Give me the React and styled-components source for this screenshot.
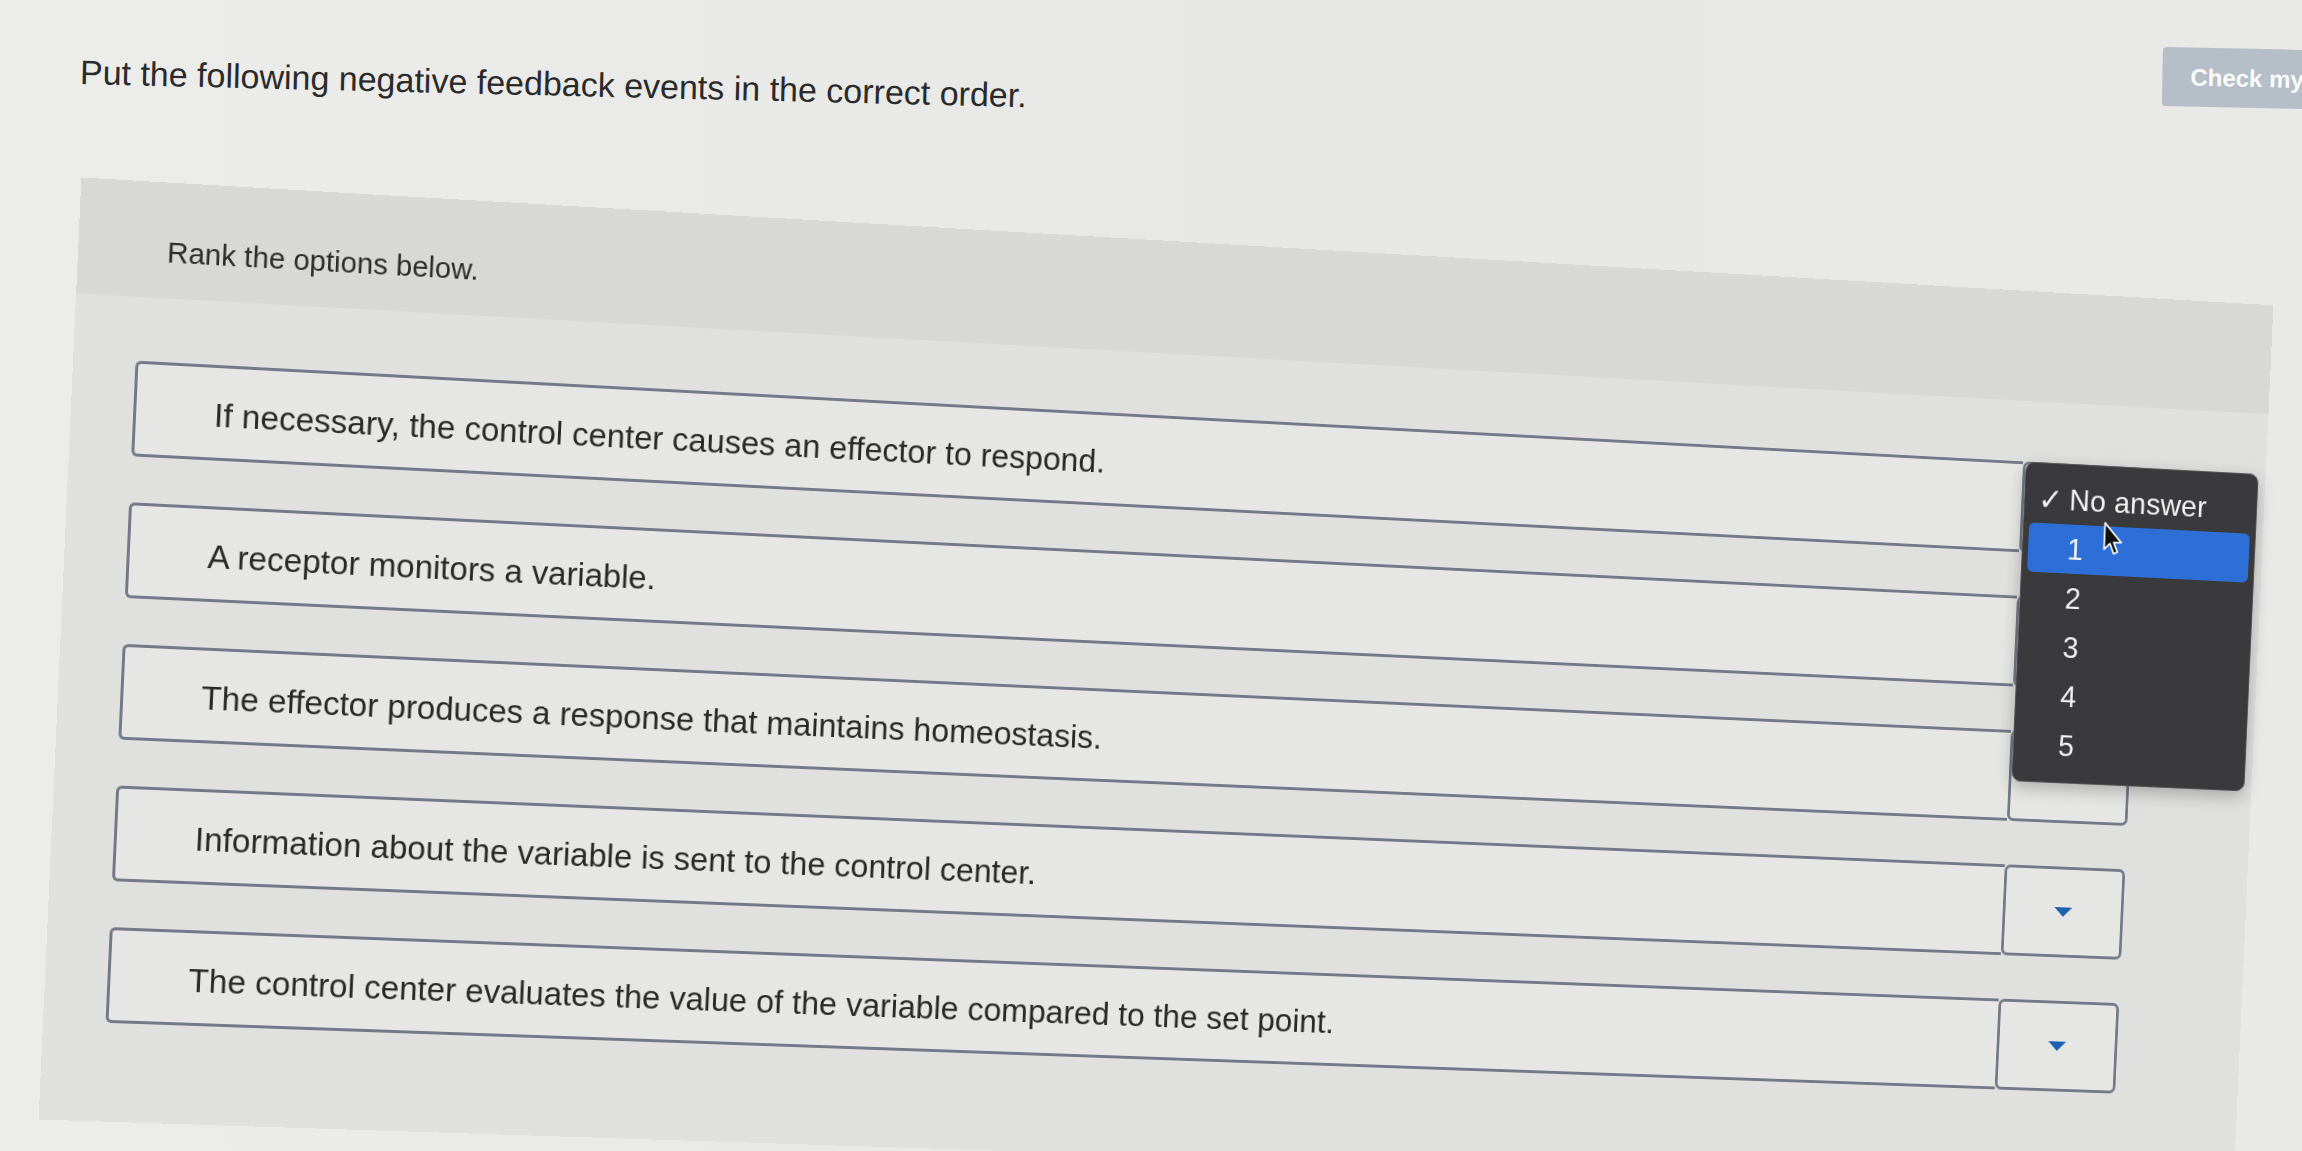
import React from 'react';
import styled, { createGlobalStyle } from 'styled-components';

const GlobalStyle = createGlobalStyle`
  html, body {
    margin: 0;
    padding: 0;
    background: #e8e8e6;
    overflow: hidden;
  }
  body {
    font-family: "Liberation Sans", "DejaVu Sans", Arial, sans-serif;
    color: #2e2e2e;
  }
`;

const Page = styled.div`
  width: 2302px;
  height: 1151px;
  overflow: hidden;
  background: linear-gradient(90deg, #ececea 0%, #e7e7e5 60%, #e9e9e7 100%);
`;

const Header = styled.header`
  display: flex;
  justify-content: space-between;
  align-items: flex-start;
  height: 177px;
  padding-left: 80px;
`;

const Title = styled.h1`
  margin: 52px 0 0;
  font-size: 34px;
  line-height: 40px;
  font-weight: 400;
  color: #2a2a2a;
  transform: rotate(1.4deg);
  transform-origin: left center;
`;

const ButtonSlot = styled.div`
  width: 139px;
  flex-shrink: 0;
  margin-top: 47px;
`;

const CheckButton = styled.button`
  height: 59px;
  padding: 0 28px;
  border: none;
  border-radius: 4px;
  background: #b6bec7;
  color: #fbfbfb;
  font-family: "Liberation Sans", Arial, sans-serif;
  font-size: 24px;
  font-weight: 700;
  white-space: nowrap;
  transform: rotate(1.2deg);
  transform-origin: left top;
`;

/* the photo looks at the screen from the left, slightly rolled */
const Panel = styled.section`
  width: 2353px;
  height: 943px;
  margin-left: 60px;
  background: #e0e0de;
  transform: rotate(2.6deg) perspective(4500px) rotateY(7deg);
  transform-origin: left center;
  display: flex;
  flex-direction: column;
`;

const PanelHead = styled.div`
  height: 116px;
  padding: 52px 0 0 90px;
  box-sizing: border-box;
  background: #d8d8d6;
  font-size: 30px;
  line-height: 36px;
  color: #2b2b2b;
`;

const RankList = styled.ol`
  list-style: none;
  margin: 0;
  padding: 64px 139px 0 63px;
  display: flex;
  flex-direction: column;
  gap: 46px;
`;

const RankRow = styled.li`
  display: flex;
  height: 96px;
`;

const OptionText = styled.div`
  flex: 1;
  display: flex;
  align-items: center;
  padding: 4px 0 0 79px;
  background: #e6e6e4;
  border: 3px solid #737988;
  border-right: none;
  border-radius: 6px 0 0 6px;
  font-size: 34px;
  color: #282828;
  white-space: nowrap;
`;

const SelectBox = styled.div`
  position: relative;
  width: 130px;
  display: flex;
  align-items: center;
  justify-content: center;
  background: #e6e6e4;
  border: 3px solid #737988;
  border-radius: 7px;
`;

const Caret = styled.span`
  width: 0;
  height: 0;
  border-left: 10px solid transparent;
  border-right: 10px solid transparent;
  border-top: 10px solid #1d5fb0;
`;

const Menu = styled.ul`
  position: absolute;
  top: -3px;
  left: 0;
  width: 250px;
  margin: 0;
  padding: 11px 6px 13px;
  list-style: none;
  background: #3a3a3c;
  border: 1px solid #58585b;
  border-radius: 10px;
  box-shadow: 0 6px 18px rgba(0, 0, 0, 0.25);
  z-index: 5;
`;

const MenuItem = styled.li`
  height: 52px;
  display: flex;
  align-items: center;
  padding-left: ${p => (p.$checked ? '9px' : '44px')};
  border-radius: 6px;
  background: ${p => (p.$active ? '#2d6fd7' : 'transparent')};
  color: #f3f3f3;
  font-size: 32px;
  letter-spacing: 0.3px;
  font-family: "Liberation Sans", "DejaVu Sans", Arial, sans-serif;
  white-space: nowrap;
`;

const Tick = styled.span`
  display: inline-block;
  width: 35px;
  font-family: "DejaVu Sans", sans-serif;
  font-size: 33px;
  font-weight: 700;
`;

const Pointer = styled.svg`
  position: absolute;
  left: 90px;
  top: 58px;
  width: 23px;
  height: 36px;
  z-index: 6;
`;

const options = [
  'If necessary, the control center causes an effector to respond.',
  'A receptor monitors a variable.',
  'The effector produces a response that maintains homeostasis.',
  'Information about the variable is sent to the control center.',
  'The control center evaluates the value of the variable compared to the set point.',
];

const RankMenu = () => (
  <Menu>
    <MenuItem $checked>
      <Tick>✓</Tick>No answer
    </MenuItem>
    {[1, 2, 3, 4, 5].map(n => (
      <MenuItem key={n} $active={n === 1}>
        {n}
      </MenuItem>
    ))}
    <Pointer viewBox="0 0 17 27">
      <path
        d="M1 1 L1 22 L5.8 17.4 L9.3 25.2 L12.4 23.8 L9 16.2 L15.4 16.2 Z"
        fill="#111"
        stroke="#fff"
        strokeWidth="1.4"
        strokeLinejoin="round"
      />
    </Pointer>
  </Menu>
);

export default function App() {
  return (
    <Page>
      <GlobalStyle />
      <Header>
        <Title>Put the following negative feedback events in the correct order.</Title>
        <ButtonSlot>
          <CheckButton>Check my work</CheckButton>
        </ButtonSlot>
      </Header>
      <Panel>
        <PanelHead>Rank the options below.</PanelHead>
        <RankList>
          {options.map((text, i) => (
            <RankRow key={text}>
              <OptionText>{text}</OptionText>
              <SelectBox>
                <Caret />
                {i === 0 && <RankMenu />}
              </SelectBox>
            </RankRow>
          ))}
        </RankList>
      </Panel>
    </Page>
  );
}
